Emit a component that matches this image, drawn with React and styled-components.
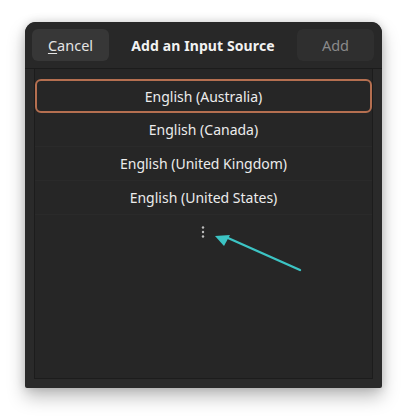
import React from "react"
import styled, { createGlobalStyle } from "styled-components"

const Global = createGlobalStyle`
    body {
        margin: 0;
        background: #ffffff;
        font-family: "Noto Sans", "Open Sans", sans-serif;
    }
`

const Page = styled.div`
    padding: 22px 0 0 25px;
    height: 417px;
    box-sizing: border-box;
`

const Dialog = styled.div`
    width: 357px;
    height: 366px;
    background: #2a2a2a;
    border-radius: 11px 11px 2px 2px;
    box-shadow: 0 9px 18px rgba(0, 0, 0, 0.26), 0 0 10px rgba(0, 0, 0, 0.16);
    display: flex;
    flex-direction: column;
    overflow: hidden;
    position: relative;
`

const Header = styled.div`
    height: 46px;
    flex-shrink: 0;
    display: flex;
    align-items: center;
    justify-content: space-between;
    padding: 0 8px 0 7px;
    background: #282828;
    border-bottom: 1px solid #1c1c1c;
`

const Button = styled.button`
    width: 77px;
    height: 32px;
    border: none;
    border-radius: 6px;
    background: ${p => (p.disabled ? "#2f2f2f" : "#373737")};
    color: ${p => (p.disabled ? "#8a8a8a" : "#e4e4e4")};
    font-family: inherit;
    font-size: 14.5px;
    padding: 0;
    u {
        text-decoration-thickness: 1px;
        text-underline-offset: 2px;
    }
`

const Title = styled.div`
    color: #f2f2f2;
    font-weight: 700;
    font-size: 14px;
    letter-spacing: 0.1px;
`

const Frame = styled.div`
    flex: 1;
    margin: 0 9px 9px;
    border: 1px solid #1c1c1c;
    border-top: none;
    background: #262626;
    padding-top: 10px;
`

const Row = styled.div`
    height: 34px;
    display: flex;
    align-items: center;
    justify-content: center;
    color: #ececec;
    font-size: 14px;
    box-sizing: border-box;
    border-bottom: 1px solid ${p => (p.selected ? "transparent" : "#2a2a2a")};
    ${p => p.selected && `
        border: 2px solid #b56f50;
        border-radius: 6px;
    `}
`

const MoreRow = styled.div`
    height: 34px;
    display: flex;
    align-items: center;
    justify-content: center;
    padding-right: 1px;
`

const Arrow = styled.svg`
    position: absolute;
    left: 185px;
    top: 205px;
`

const languages = [
    "English (Australia)",
    "English (Canada)",
    "English (United Kingdom)",
    "English (United States)",
]

export default function App() {
    return (
        <Page>
            <Global />
            <Dialog>
                <Header>
                    <Button><u>C</u>ancel</Button>
                    <Title>Add an Input Source</Title>
                    <Button disabled>Add</Button>
                </Header>
                <Frame>
                    {languages.map((l, i) => (
                        <Row key={l} selected={i === 0}>{l}</Row>
                    ))}
                    <MoreRow>
                        <svg width="4" height="12" viewBox="0 0 4 12">
                            <circle cx="2" cy="1.5" r="1.2" fill="#bdbdbd" />
                            <circle cx="2" cy="6" r="1.2" fill="#bdbdbd" />
                            <circle cx="2" cy="10.5" r="1.2" fill="#bdbdbd" />
                        </svg>
                    </MoreRow>
                </Frame>
                <Arrow width="100" height="60" viewBox="0 0 100 60">
                    <line x1="90" y1="43" x2="18" y2="11" stroke="#3cc4c4" strokeWidth="2.4" strokeLinecap="round" />
                    <polygon points="5,9 20,8 14,19" fill="#3cc4c4" />
                </Arrow>
            </Dialog>
        </Page>
    )
}
